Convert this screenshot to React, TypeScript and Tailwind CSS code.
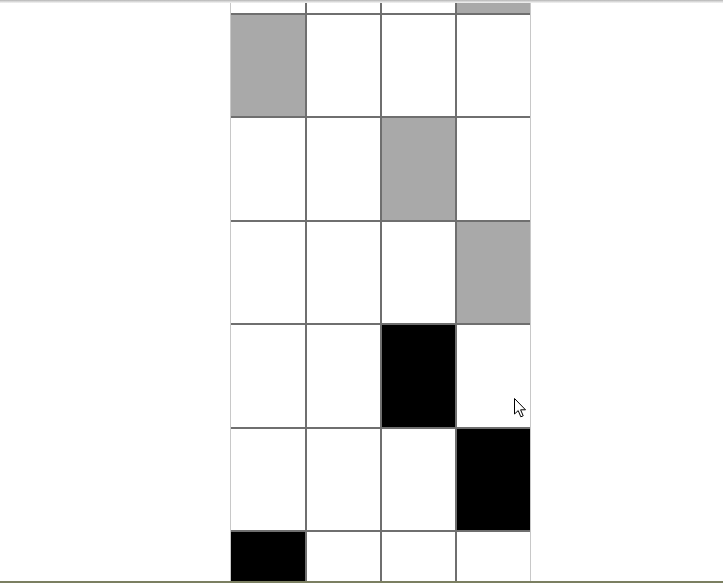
const rows: string[][] = [
  ['w', 'w', 'w', 'g'],
  ['g', 'w', 'w', 'w'],
  ['w', 'w', 'g', 'w'],
  ['w', 'w', 'w', 'g'],
  ['w', 'w', 'b', 'w'],
  ['w', 'w', 'w', 'b'],
  ['b', 'w', 'w', 'w'],
];

const tileColor: Record<string, string> = {
  w: 'bg-white',
  g: 'bg-[#a9a9a9]',
  b: 'bg-black',
};

function Cursor() {
  return (
    <svg className="absolute left-[514px] top-[398px]" width="14" height="21" viewBox="0 0 14 21">
      <path
        d="M0.5 0.5 L0.5 16 L4.2 12.6 L6.8 18.8 L9.2 17.8 L6.6 11.8 L11.5 11.8 Z"
        fill="white"
        stroke="black"
        strokeWidth="1"
        strokeLinejoin="round"
      />
    </svg>
  );
}

export default function App() {
  return (
    <div className="relative flex h-[583px] w-full flex-col overflow-hidden bg-white">
      {/* top edge */}
      <div className="h-[3px] w-full bg-gradient-to-b from-[#b4b4b4] via-[#d8d8d8] to-[#f4f4f4]" />

      <main className="flex-1 overflow-hidden">
        <div className="ml-[230px] w-[301px] border-x border-[#c8c8c8]">
          <div className="grid grid-cols-[74px_73px_73px_73px] grid-rows-[10px_101px_102px_101px_102px_101px_49px] gap-[2px] bg-[#6f6f6f]">
            {rows.map((row, r) =>
              row.map((c, i) => <div key={`${r}-${i}`} className={tileColor[c]} />)
            )}
          </div>
        </div>
      </main>

      {/* bottom edge */}
      <div className="h-[2px] w-full bg-[#7b7f61]" />

      <Cursor />
    </div>
  );
}
